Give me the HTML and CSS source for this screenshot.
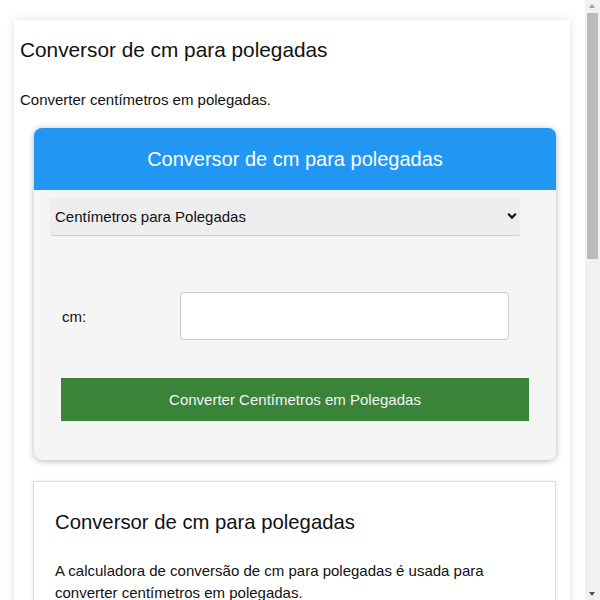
FILE: index.html
```html
<!DOCTYPE html>
<html lang="pt">
<head>
<meta charset="utf-8">
<title>Conversor de cm para polegadas</title>
<link rel="stylesheet" href="styles.css">
</head>
<body>
<main class="page">
  <h1 class="page-title">Conversor de cm para polegadas</h1>
  <p class="page-lead">Converter centímetros em polegadas.</p>

  <section class="calc">
    <header class="calc-head">Conversor de cm para polegadas</header>
    <div class="calc-body">
      <div class="select-wrap">
        <select class="mode">
          <option>Centímetros para Polegadas</option>
          <option>Polegadas para Centímetros</option>
        </select>
        <svg class="chev" width="10" height="8" viewBox="0 0 10 8"><path d="M1.2 1.8 L5 5.6 L8.8 1.8" fill="none" stroke="#111" stroke-width="2.2"/></svg>
      </div>
      <div class="field">
        <label class="field-label" for="cm">cm:</label>
        <input class="field-input" id="cm" type="text">
      </div>
      <button class="convert">Converter Centímetros em Polegadas</button>
    </div>
  </section>

  <article class="info">
    <h2 class="info-title">Conversor de cm para polegadas</h2>
    <p class="info-text">A calculadora de conversão de cm para polegadas é usada para converter centímetros em polegadas.</p>
    <p class="info-text">Uma polegada equivale a exatamente 2,54 centímetros. Para converter centímetros em polegadas, divida o valor em centímetros por 2,54.</p>
    <h3 class="info-sub">Fórmula</h3>
    <p class="info-text">polegadas = centímetros ÷ 2,54</p>
    <h3 class="info-sub">Exemplo</h3>
    <p class="info-text">Converter 10 centímetros em polegadas: 10 ÷ 2,54 = 3,937 polegadas.</p>
    <h3 class="info-sub">Tabela de conversão</h3>
    <p class="info-text">1 cm = 0,3937 pol<br>2 cm = 0,7874 pol<br>5 cm = 1,9685 pol<br>10 cm = 3,9370 pol<br>20 cm = 7,8740 pol<br>50 cm = 19,6850 pol<br>100 cm = 39,3701 pol</p>
    <p class="info-text">O centímetro é uma unidade de comprimento do Sistema Internacional de Unidades, igual a um centésimo de metro. A polegada é uma unidade de comprimento do sistema imperial e do sistema usual dos Estados Unidos.</p>
  </article>
</main>

<div class="scrollbar" aria-hidden="true">
  <span class="sb-up"></span>
  <span class="sb-thumb"></span>
  <span class="sb-down"></span>
</div>
</body>
</html>
```

FILE: styles.css
```css
html, body {
  margin: 0;
  padding: 0;
  background: #ffffff;
}

body {
  font-family: "Liberation Sans", Arial, sans-serif;
  color: #111;
}

.page {
  margin: 20px 30px 40px 14px;
  padding: 18px 6px 30px;
  background: #ffffff;
  box-shadow: 0 0 9px rgba(0, 0, 0, 0.12);
}

.page-title {
  margin: 0;
  font-size: 20.8px;
  font-weight: normal;
  line-height: 24px;
}

.page-lead {
  margin: 29px 0 0;
  font-size: 15px;
  line-height: 18px;
}

.calc {
  margin: 19px 8px 0 14px;
  background: #f5f5f5;
  border-radius: 8px;
  overflow: hidden;
  box-shadow: 0 1px 6px rgba(0, 0, 0, 0.3);
}

.calc-head {
  height: 62px;
  background: #2196f3;
  color: #fff;
  font-size: 20px;
  line-height: 62px;
  text-align: center;
}

.calc-body {
  padding: 8px 0 39px;
}

.select-wrap {
  position: relative;
  margin: 0 36px 0 16px;
}

.mode {
  display: block;
  width: 100%;
  height: 38px;
  margin: 0;
  padding: 0 5px;
  appearance: none;
  -webkit-appearance: none;
  background: #eeeeee;
  border: none;
  border-bottom: 1px solid #cfcfcf;
  border-radius: 3px;
  box-shadow: 0 0 1px rgba(0, 0, 0, 0.15);
  font-family: "Liberation Sans", Arial, sans-serif;
  font-size: 15px;
  color: #111;
}

.chev {
  position: absolute;
  right: 3px;
  top: 14px;
}

.field {
  display: flex;
  align-items: center;
  margin: 56px 0 0 28px;
}

.field-label {
  width: 118px;
  font-size: 15px;
}

.field-input {
  box-sizing: border-box;
  width: 329px;
  height: 48px;
  margin: 0;
  border: 1px solid #cccccc;
  border-radius: 4px;
  background: #fff;
}

.convert {
  display: block;
  width: 468px;
  height: 43px;
  margin: 38px 0 0 27px;
  border: none;
  background: #3a843a;
  color: #f4f4f4;
  font-family: "Liberation Sans", Arial, sans-serif;
  font-size: 15px;
}

.info {
  margin: 21px 8px 0 13px;
  padding: 26px 21px 20px;
  border: 1px solid #dddddd;
  box-shadow: 0 1px 4px rgba(0, 0, 0, 0.12);
  background: #fff;
}

.info-title {
  margin: 0;
  font-size: 20.3px;
  font-weight: normal;
  line-height: 28px;
}

.info-sub {
  margin: 22px 0 0;
  font-size: 17px;
  font-weight: normal;
}

.info-text {
  margin: 24px 0 0;
  font-size: 15px;
  line-height: 22px;
}

.scrollbar {
  position: fixed;
  top: 0;
  right: 0;
  width: 15px;
  height: 100%;
  background: #f1f1f1;
}

.sb-thumb {
  position: absolute;
  left: 2px;
  top: 13px;
  width: 11px;
  height: 246px;
  background: #bcbcbc;
}

.sb-up,
.sb-down {
  position: absolute;
  left: 4px;
  width: 0;
  height: 0;
  border-left: 3.5px solid transparent;
  border-right: 3.5px solid transparent;
}

.sb-up {
  top: 4px;
  border-bottom: 4px solid #a3a3a3;
}

.sb-down {
  bottom: 4px;
  border-top: 4px solid #505050;
}
```
